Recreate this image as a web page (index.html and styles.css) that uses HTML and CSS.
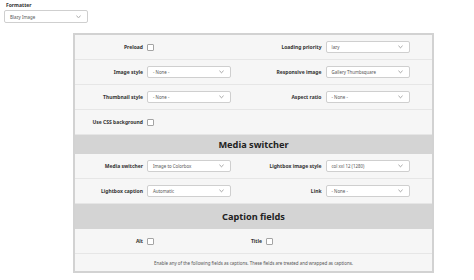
FILE: index.html
```html
<!DOCTYPE html>
<html>
<head>
<meta charset="utf-8">
<link rel="stylesheet" href="styles.css">
</head>
<body>
<div class="formatter">
  <div class="formatter-label">Formatter</div>
  <div class="select select-formatter"><span>Blazy Image</span><svg class="chev" viewBox="0 0 6 4"><polyline points="0.5,0.8 3,3.2 5.5,0.8"/></svg></div>
</div>

<div class="panel">
  <div class="row">
    <div class="field"><span class="label">Preload</span><span class="check"></span></div>
    <div class="field"><span class="label">Loading priority</span><div class="select"><span>lazy</span><svg class="chev" viewBox="0 0 6 4"><polyline points="0.5,0.8 3,3.2 5.5,0.8"/></svg></div></div>
  </div>
  <div class="row">
    <div class="field"><span class="label">Image style</span><div class="select"><span>- None -</span><svg class="chev" viewBox="0 0 6 4"><polyline points="0.5,0.8 3,3.2 5.5,0.8"/></svg></div></div>
    <div class="field"><span class="label">Responsive image</span><div class="select"><span>Gallery Thumbsquare</span><svg class="chev" viewBox="0 0 6 4"><polyline points="0.5,0.8 3,3.2 5.5,0.8"/></svg></div></div>
  </div>
  <div class="row">
    <div class="field"><span class="label">Thumbnail style</span><div class="select"><span>- None -</span><svg class="chev" viewBox="0 0 6 4"><polyline points="0.5,0.8 3,3.2 5.5,0.8"/></svg></div></div>
    <div class="field"><span class="label">Aspect ratio</span><div class="select"><span>- None -</span><svg class="chev" viewBox="0 0 6 4"><polyline points="0.5,0.8 3,3.2 5.5,0.8"/></svg></div></div>
  </div>
  <div class="row">
    <div class="field"><span class="label">Use CSS background</span><span class="check"></span></div>
    <div class="field"></div>
  </div>
  <div class="section section-media">Media switcher</div>
  <div class="row">
    <div class="field"><span class="label">Media switcher</span><div class="select"><span>Image to Colorbox</span><svg class="chev" viewBox="0 0 6 4"><polyline points="0.5,0.8 3,3.2 5.5,0.8"/></svg></div></div>
    <div class="field"><span class="label">Lightbox image style</span><div class="select"><span>col xxl 12 (1280)</span><svg class="chev" viewBox="0 0 6 4"><polyline points="0.5,0.8 3,3.2 5.5,0.8"/></svg></div></div>
  </div>
  <div class="row">
    <div class="field"><span class="label">Lightbox caption</span><div class="select"><span>Automatic</span><svg class="chev" viewBox="0 0 6 4"><polyline points="0.5,0.8 3,3.2 5.5,0.8"/></svg></div></div>
    <div class="field"><span class="label">Link</span><div class="select"><span>- None -</span><svg class="chev" viewBox="0 0 6 4"><polyline points="0.5,0.8 3,3.2 5.5,0.8"/></svg></div></div>
  </div>
  <div class="section section-caption">Caption fields</div>
  <div class="row row-3">
    <div class="field"><span class="label">Alt</span><span class="check"></span></div>
    <div class="field"><span class="label">Title</span><span class="check"></span></div>
    <div class="field"></div>
  </div>
  <div class="desc">Enable any of the following fields as captions. These fields are treated and wrapped as captions.</div>
</div>
</body>
</html>
```
FILE: styles.css
```css
* { box-sizing: border-box; }
body {
  margin: 0;
  background: #fff;
  font-family: "Noto Sans", "DejaVu Sans", sans-serif;
  color: #333;
}
.formatter {
  padding: 2px 4px 0 4px;
}
.formatter-label {
  font-size: 5px;
  font-weight: 700;
  line-height: 7px;
  padding-left: 2px;
  color: #333;
}
.select {
  display: flex;
  align-items: center;
  justify-content: space-between;
  width: 84px;
  height: 12px;
  border: 1px solid #cfcfcf;
  border-radius: 2px;
  background: #fff;
  padding: 0 6px 0 5px;
  font-size: 4.4px;
  color: #555;
}
.select-formatter {
  height: 13px;
  margin-top: 1px;
}
.chev {
  width: 5px;
  height: 3.5px;
}
.chev polyline {
  fill: none;
  stroke: #777;
  stroke-width: 0.8;
}
.panel {
  margin: 10px 0 0 73px;
  width: 361px;
  border: 2px solid #d2d2d2;
  background: #f6f6f6;
}
.row {
  display: grid;
  grid-template-columns: 1fr 1fr;
  height: 25px;
  border-bottom: 1px solid #e6e6e6;
}
.row-3 {
  grid-template-columns: 1fr 1fr 1fr;
}
.field {
  display: grid;
  grid-template-columns: 68px auto;
  column-gap: 4px;
  align-items: center;
  justify-content: start;
}
.label {
  text-align: right;
  font-size: 5px;
  font-weight: 700;
  color: #333;
  white-space: nowrap;
}
.check {
  width: 7px;
  height: 7px;
  border: 1px solid #a4a4a4;
  border-radius: 1px;
  background: #fff;
}
.section {
  background: #d4d4d4;
  text-align: center;
  font-weight: 700;
  font-size: 9.2px;
  color: #222;
  display: flex;
  align-items: center;
  justify-content: center;
}
.section-media { height: 19px; }
.section-caption { height: 25px; }
.desc {
  height: 17px;
  display: flex;
  align-items: center;
  justify-content: center;
  font-size: 4.45px;
  color: #555;
}
```
